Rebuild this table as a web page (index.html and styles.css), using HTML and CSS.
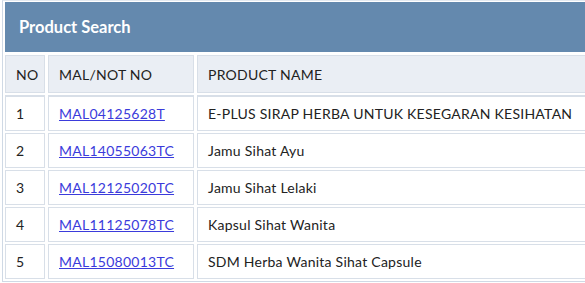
FILE: index.html
```html
<!DOCTYPE html>
<html>
<head>
<meta charset="utf-8">
<link rel="stylesheet" href="styles.css">
</head>
<body>
<div class="panel">
  <div class="panel-title">Product Search</div>
  <table class="results">
    <thead>
      <tr><th>NO</th><th>MAL/NOT NO</th><th>PRODUCT NAME</th></tr>
    </thead>
    <tbody>
      <tr><td>1</td><td><a href="#">MAL04125628T</a></td><td>E-PLUS SIRAP HERBA UNTUK KESEGARAN KESIHATAN</td></tr>
      <tr><td>2</td><td><a href="#">MAL14055063TC</a></td><td>Jamu Sihat Ayu</td></tr>
      <tr><td>3</td><td><a href="#">MAL12125020TC</a></td><td>Jamu Sihat Lelaki</td></tr>
      <tr><td>4</td><td><a href="#">MAL11125078TC</a></td><td>Kapsul Sihat Wanita</td></tr>
      <tr><td>5</td><td><a href="#">MAL15080013TC</a></td><td>SDM Herba Wanita Sihat Capsule</td></tr>
    </tbody>
  </table>
</div>
</body>
</html>
```
FILE: styles.css
```css
html, body {
  margin: 0;
  padding: 0;
  background: #ffffff;
  overflow: hidden;
}
body {
  font-family: Lato, "Open Sans", sans-serif;
  font-size: 14px;
  letter-spacing: 0.25px;
  color: #222;
}
.panel {
  margin-left: 2px;
  border-left: 1px solid #cfd9e5;
  border-top: 1px solid #e3e9f0;
  border-bottom: 1px solid #cfd9e5;
  padding: 1px 0 0 0;
  width: 640px;
}
.panel-title {
  margin-left: 2px;
  height: 50px;
  background: #6489ae;
  color: #fff;
  font-weight: bold;
  font-size: 16.5px;
  letter-spacing: 0;
  line-height: 50px;
  padding-left: 14px;
}
.results {
  border-collapse: separate;
  border-spacing: 3px 2px;
  width: calc(100% + 1px);
  margin: 1px 0 0 -1px;
  table-layout: fixed;
}
.results th, .results td {
  border: 1px solid #d8dfe8;
  text-align: left;
  font-weight: normal;
  white-space: nowrap;
  box-sizing: border-box;
}
.results th {
  background: #eaeef4;
  height: 38px;
}
.results td {
  height: 35px;
}
.results tbody tr:first-child td { border-top-width: 2px; height: 36px; }
.results tr > :nth-child(1) { width: 40px; padding-left: 10px; }
.results tr > :nth-child(2) { width: 146px; padding-left: 10px; }
.results tr > :nth-child(3) { padding-left: 10px; }
.results a {
  color: #3b3bdb;
  text-decoration: underline;
}
```
